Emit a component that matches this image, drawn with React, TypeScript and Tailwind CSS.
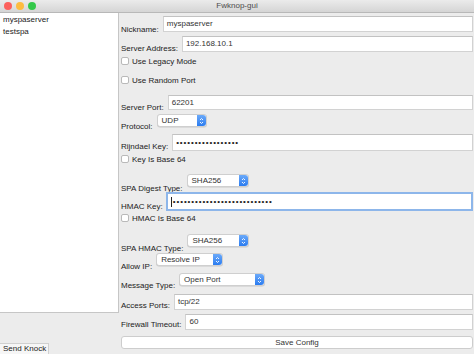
import React from 'react'

const FONT = "font-['Liberation_Sans','Helvetica',sans-serif]"

function Stepper() {
  return (
    <div className="w-[9px] self-stretch rounded-r-[3px] bg-gradient-to-b from-[#6aa9f9] to-[#2a7cf0] flex items-center justify-center">
      <svg width="5" height="8" viewBox="0 0 5 8">
        <path d="M1 3 L2.5 1.5 L4 3" stroke="white" strokeWidth="0.9" fill="none" />
        <path d="M1 5 L2.5 6.5 L4 5" stroke="white" strokeWidth="0.9" fill="none" />
      </svg>
    </div>
  )
}

function TextRow({
  label,
  value,
  mt,
  h,
  lo,
  children,
}: {
  label: string
  value?: string
  mt: string
  h: string
  lo: string
  children?: React.ReactNode
}) {
  return (
    <div className={`flex ${mt} ${h}`}>
      <span className={`${lo} leading-[11px] whitespace-nowrap`}>{label}</span>
      <div className="ml-[4px] flex-1 bg-white border border-[#d2d2d2] border-t-[#c2c2c2] flex items-center pl-[3px] text-[#333]">
        {children ?? value}
      </div>
    </div>
  )
}

function SelectRow({
  label,
  value,
  mt,
  w,
  lo,
}: {
  label: string
  value: string
  mt: string
  w: string
  lo: string
}) {
  return (
    <div className={`flex ${mt} h-[13px]`}>
      <span className={`${lo} leading-[11px] whitespace-nowrap`}>{label}</span>
      <div
        className={`ml-[4px] ${w} flex bg-white border border-[#cfcfcf] rounded-[3px] shadow-[0_0.5px_0.5px_rgba(0,0,0,0.15)]`}
      >
        <span className="flex-1 pl-[4px] leading-[11px] text-[#333]">{value}</span>
        <Stepper />
      </div>
    </div>
  )
}

function Check({ label, mt }: { label: string; mt: string }) {
  return (
    <div className={`flex items-center ${mt} h-[12px]`}>
      <div className="w-[8px] h-[8px] bg-white border border-[#b9b9b9] rounded-[2px]" />
      <span className="ml-[3px] leading-[11px]">{label}</span>
    </div>
  )
}

function Dots({ n }: { n: number }) {
  return <span className="tracking-[0.9px] text-[8px] text-[#222]">{'•'.repeat(n)}</span>
}

export default function App() {
  return (
    <div className={`w-[474px] h-[354px] flex flex-col ${FONT} text-[8px] text-[#222] bg-[#ececec] overflow-hidden`}>
      {/* title bar */}
      <div className="h-[13px] relative flex items-center justify-center bg-gradient-to-b from-[#ebebeb] to-[#d5d5d5] border-b border-[#b8b8b8]">
        <div className="absolute left-[4px] top-[2px] flex gap-[4px]">
          <div className="w-[8px] h-[8px] rounded-full bg-[#fc605c]" />
          <div className="w-[8px] h-[8px] rounded-full bg-[#fdbc40]" />
          <div className="w-[8px] h-[8px] rounded-full bg-[#34c84a]" />
        </div>
        <span className="text-[#4d4d4d] leading-[10px]">Fwknop-gui</span>
      </div>

      <div className="flex flex-1">
        {/* left: server list */}
        <div className="w-[119px] flex flex-col">
          <div className="h-[300px] bg-white border-r border-b border-[#c6c6c6] pl-[3px] pt-[1px]">
            <div className="leading-[12px]">myspaserver</div>
            <div className="leading-[12px]">testspa</div>
          </div>
          <div className="flex-1 flex items-end">
            <div className="h-[11px] w-[49px] bg-[#f6f6f6] border-t border-r border-[#d0d0d0] pl-[3px] leading-[10px]">
              Send Knock
            </div>
          </div>
        </div>

        {/* right: config form */}
        <div className="flex-1 flex flex-col pl-[2px] pr-[1px]">
          <TextRow label="Nickname:" value="myspaserver" mt="mt-[3px]" h="h-[16px]" lo="mt-[8px]" />
          <TextRow label="Server Address:" value="192.168.10.1" mt="mt-[4px]" h="h-[16px]" lo="mt-[7px]" />
          <Check label="Use Legacy Mode" mt="mt-[3px]" />
          <Check label="Use Random Port" mt="mt-[7px]" />
          <TextRow label="Server Port:" value="62201" mt="mt-[9px]" h="h-[15px]" lo="mt-[7px]" />
          <SelectRow label="Protocol:" value="UDP" mt="mt-[4px]" w="w-[50px]" lo="mt-[7px]" />
          <TextRow label="Rijndael Key:" mt="mt-[7px]" h="h-[17px]" lo="mt-[7px]">
            <Dots n={17} />
          </TextRow>
          <Check label="Key Is Base 64" mt="mt-[2px]" />
          <SelectRow label="SPA Digest Type:" value="SHA256" mt="mt-[9px]" w="w-[62px]" lo="mt-[9px]" />
          <div className="flex mt-[5px] h-[19px]">
            <span className="mt-[9px] leading-[11px] whitespace-nowrap">HMAC Key:</span>
            <div className="ml-[3px] flex-1 bg-white border-2 border-[#8db6ea] flex items-center pl-[3px]">
              <span className="w-[1px] h-[10px] bg-[#222] mr-[1px]" />
              <Dots n={27} />
            </div>
          </div>
          <Check label="HMAC Is Base 64" mt="mt-[1px]" />
          <SelectRow label="SPA HMAC Type:" value="SHA256" mt="mt-[10px]" w="w-[62px]" lo="mt-[9px]" />
          <SelectRow label="Allow IP:" value="Resolve IP" mt="mt-[6px]" w="w-[67px]" lo="mt-[8px]" />
          <SelectRow label="Message Type:" value="Open Port" mt="mt-[7px]" w="w-[86px]" lo="mt-[7px]" />
          <TextRow label="Access Ports:" value="tcp/22" mt="mt-[8px]" h="h-[16px]" lo="mt-[6px]" />
          <TextRow label="Firewall Timeout:" value="60" mt="mt-[4px]" h="h-[16px]" lo="mt-[5px]" />
          <div className="mt-[6px] h-[13px] bg-white border border-[#cdcdcd] rounded-[3px] flex items-center justify-center text-[#333]">
            Save Config
          </div>
        </div>
      </div>
    </div>
  )
}
